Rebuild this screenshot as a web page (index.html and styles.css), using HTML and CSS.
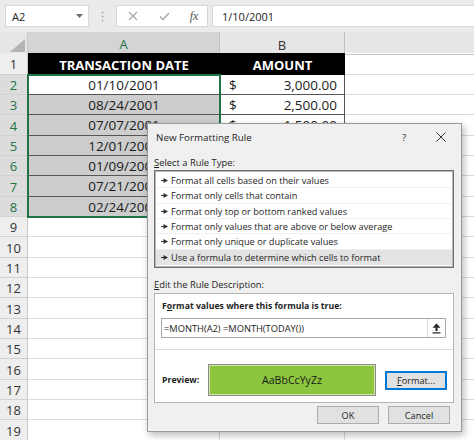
FILE: index.html
```html
<!DOCTYPE html>
<html>
<head>
<meta charset="utf-8">
<link rel="stylesheet" href="styles.css">
</head>
<body>
<div class="fbar">
  <div class="namebox"><span>A2</span><svg class="caret" width="7" height="4" viewBox="0 0 7 4"><polygon points="0,0 7,0 3.5,4" fill="#6a6a6a"/></svg></div>
  <div class="grip"><svg width="3" height="11" viewBox="0 0 3 11"><circle cx="1.5" cy="1.5" r="1" fill="#b0b0b0"/><circle cx="1.5" cy="5.5" r="1" fill="#b0b0b0"/><circle cx="1.5" cy="9.5" r="1" fill="#b0b0b0"/></svg></div>
  <div class="fbtns">
    <span class="fi"><svg width="10" height="10" viewBox="0 0 10 10"><path d="M1 1 L9 9 M9 1 L1 9" stroke="#a8a8a8" stroke-width="1.2"/></svg></span>
    <span class="fi"><svg width="11" height="9" viewBox="0 0 11 9"><path d="M1 4.5 L4 7.5 L10 1" stroke="#a8a8a8" stroke-width="1.3" fill="none"/></svg></span>
    <span class="fi fx">fx</span>
  </div>
  <div class="finput">1/10/2001</div>
</div>

<div class="sheet">
  <div class="row hrow">
    <div class="corner"><svg width="15" height="13" viewBox="0 0 15 13"><polygon points="0,13 15,13 15,0" fill="#b4b4b4"/></svg></div>
    <div class="ch sel">A</div>
    <div class="ch">B</div>
    <div class="ch rest"></div>
  </div>
  <div class="row h22">
    <div class="rh">1</div>
    <div class="c hd">TRANSACTION DATE</div>
    <div class="c hd">AMOUNT</div>
    <div class="c g"></div>
  </div>
  <div class="row h20">
    <div class="rh on">2</div>
    <div class="c da act">01/10/2001</div>
    <div class="c mo"><span>$</span><span>3,000.00</span></div>
    <div class="c g"></div>
  </div>
  <div class="row h20">
    <div class="rh on">3</div>
    <div class="c da">08/24/2001</div>
    <div class="c mo"><span>$</span><span>2,500.00</span></div>
    <div class="c g"></div>
  </div>
  <div class="row h21">
    <div class="rh on">4</div>
    <div class="c da">07/07/2001</div>
    <div class="c mo"><span>$</span><span>1,500.00</span></div>
    <div class="c g"></div>
  </div>
  <div class="row h20">
    <div class="rh on">5</div>
    <div class="c da">12/01/2001</div>
    <div class="c mo"></div>
    <div class="c g"></div>
  </div>
  <div class="row h20">
    <div class="rh on">6</div>
    <div class="c da">01/09/2001</div>
    <div class="c mo"></div>
    <div class="c g"></div>
  </div>
  <div class="row h21">
    <div class="rh on">7</div>
    <div class="c da">07/21/2001</div>
    <div class="c mo"></div>
    <div class="c g"></div>
  </div>
  <div class="row h20">
    <div class="rh on">8</div>
    <div class="c da">02/24/2001</div>
    <div class="c mo"></div>
    <div class="c g"></div>
  </div>
  <div class="row h20"><div class="rh">9</div><div class="c g"></div><div class="c g"></div><div class="c g"></div></div>
  <div class="row h21"><div class="rh">10</div><div class="c g"></div><div class="c g"></div><div class="c g"></div></div>
  <div class="row h20"><div class="rh">11</div><div class="c g"></div><div class="c g"></div><div class="c g"></div></div>
  <div class="row h20"><div class="rh">12</div><div class="c g"></div><div class="c g"></div><div class="c g"></div></div>
  <div class="row h21"><div class="rh">13</div><div class="c g"></div><div class="c g"></div><div class="c g"></div></div>
  <div class="row h20"><div class="rh">14</div><div class="c g"></div><div class="c g"></div><div class="c g"></div></div>
  <div class="row h20"><div class="rh">15</div><div class="c g"></div><div class="c g"></div><div class="c g"></div></div>
  <div class="row h21"><div class="rh">16</div><div class="c g"></div><div class="c g"></div><div class="c g"></div></div>
  <div class="row h20"><div class="rh">17</div><div class="c g"></div><div class="c g"></div><div class="c g"></div></div>
  <div class="row h20"><div class="rh">18</div><div class="c g"></div><div class="c g"></div><div class="c g"></div></div>
  <div class="row h21"><div class="rh">19</div><div class="c g"></div><div class="c g"></div><div class="c g"></div></div>
</div>

<div class="selbox"></div>

<div class="dlg">
  <div class="dtitle">
    <span class="dt">New Formatting Rule</span>
    <span class="dq">?</span>
    <svg class="dx" width="10" height="10" viewBox="0 0 10 10"><path d="M0.5 0.5 L9.5 9.5 M9.5 0.5 L0.5 9.5" stroke="#333" stroke-width="1"/></svg>
  </div>
  <div class="lbl l1"><u>S</u>elect a Rule Type:</div>
  <div class="list">
    <div class="item i15"><svg class="arr" width="7" height="5" viewBox="0 0 7 5"><path d="M0 2.5 H3" stroke="#333" stroke-width="1"/><polygon points="2.5,0 7,2.5 2.5,5" fill="#333"/></svg>Format all cells based on their values</div>
    <div class="item i16"><svg class="arr" width="7" height="5" viewBox="0 0 7 5"><path d="M0 2.5 H3" stroke="#333" stroke-width="1"/><polygon points="2.5,0 7,2.5 2.5,5" fill="#333"/></svg>Format only cells that contain</div>
    <div class="item i15"><svg class="arr" width="7" height="5" viewBox="0 0 7 5"><path d="M0 2.5 H3" stroke="#333" stroke-width="1"/><polygon points="2.5,0 7,2.5 2.5,5" fill="#333"/></svg>Format only top or bottom ranked values</div>
    <div class="item i15"><svg class="arr" width="7" height="5" viewBox="0 0 7 5"><path d="M0 2.5 H3" stroke="#333" stroke-width="1"/><polygon points="2.5,0 7,2.5 2.5,5" fill="#333"/></svg>Format only values that are above or below average</div>
    <div class="item i16"><svg class="arr" width="7" height="5" viewBox="0 0 7 5"><path d="M0 2.5 H3" stroke="#333" stroke-width="1"/><polygon points="2.5,0 7,2.5 2.5,5" fill="#333"/></svg>Format only unique or duplicate values</div>
    <div class="item i15 isel"><svg class="arr" width="7" height="5" viewBox="0 0 7 5"><path d="M0 2.5 H3" stroke="#333" stroke-width="1"/><polygon points="2.5,0 7,2.5 2.5,5" fill="#333"/></svg>Use a formula to determine which cells to format</div>
  </div>
  <div class="lbl l2"><u>E</u>dit the Rule Description:</div>
  <div class="group">
    <div class="gtop">
      <div class="blbl">F<u>o</u>rmat values where this formula is true:</div>
      <div class="finp">
        <span class="ftxt">=MONTH(A2) =MONTH(TODAY())</span>
        <span class="cbtn"><svg width="9" height="11" viewBox="0 0 9 11"><polygon points="4.5,0.5 8.5,4.8 0.5,4.8" fill="#222"/><rect x="3.5" y="4.5" width="2" height="3.5" fill="#222"/><rect x="0.5" y="9.3" width="8" height="1.2" fill="#222"/></svg></span>
      </div>
    </div>
    <div class="gbot">
      <div class="blbl plbl">Preview:</div>
      <div class="prev">AaBbCcYyZz</div>
      <div class="btn fmt"><u>F</u>ormat...</div>
    </div>
  </div>
  <div class="actions">
    <div class="btn">OK</div>
    <div class="btn">Cancel</div>
  </div>
</div>
</body>
</html>
```

FILE: styles.css
```css
* { box-sizing: border-box; }
html, body { margin: 0; padding: 0; }
body {
  width: 474px;
  height: 440px;
  overflow: hidden;
  position: relative;
  background: #fff;
  font-family: "Open Sans", "Noto Sans", sans-serif;
  color: #1e1e1e;
}

/* formula bar */
.fbar {
  height: 32px;
  background: #ebebeb;
  display: flex;
  align-items: center;
  padding-left: 5px;
}
.namebox {
  width: 84px;
  height: 22px;
  background: #fff;
  border: 1px solid #d8d8d8;
  display: flex;
  align-items: center;
  justify-content: space-between;
  padding: 0 5px 0 6px;
  font-size: 11px;
}
.grip {
  width: 27px;
  display: flex;
  justify-content: center;
}
.fbtns {
  width: 92px;
  height: 22px;
  background: #fff;
  border: 1px solid #d8d8d8;
  display: grid;
  grid-template-columns: 32px 30px 30px;
  align-items: center;
}
.fi { display: flex; justify-content: center; align-items: center; }
.fx {
  font-family: "Liberation Serif", "DejaVu Serif", serif;
  font-style: italic;
  font-size: 12px;
  color: #555;
}
.finput {
  flex: 1;
  height: 22px;
  margin-left: 4px;
  background: #fff;
  border: 1px solid #d8d8d8;
  border-right: none;
  padding-left: 9px;
  display: flex;
  align-items: center;
  font-size: 11px;
}

/* sheet */
.sheet { display: flex; flex-direction: column; }
.row {
  display: grid;
  grid-template-columns: 28px 192px 125px 1fr;
}
.hrow { height: 21px; background: #e6e6e6; }
.h22 { height: 22px; }
.h20 { height: 20px; }
.h21 { height: 21px; }
.corner {
  display: flex;
  align-items: flex-end;
  justify-content: flex-end;
  padding: 0 2px 2px 0;
  border-right: 1px solid #c8c8c8;
  border-bottom: 1px solid #c8c8c8;
}
.ch {
  display: flex;
  align-items: center;
  justify-content: center;
  font-size: 13px;
  color: #333;
  padding-top: 3px;
  border-right: 1px solid #c0c0c0;
  border-bottom: 1px solid #c8c8c8;
}
.ch.sel {
  background: #d4d4d4;
  color: #217346;
  border-bottom: 2px solid #217346;
}
.ch.rest { border-right: none; }
.rh {
  background: #eeeeee;
  border-right: 1px solid #c8c8c8;
  border-bottom: 1px solid #d2d2d2;
  display: flex;
  align-items: center;
  justify-content: center;
  font-size: 13px;
  color: #333;
  padding-top: 1px;
}
.rh.on { background: #dcdcdc; color: #217346; }
.c {
  display: flex;
  align-items: center;
  font-size: 13.5px;
  color: #1a1a1a;
  overflow: hidden;
  white-space: nowrap;
}
.c.g {
  border-right: 1px solid #dadada;
  border-bottom: 1px solid #dadada;
}
.row .c.g:last-child { border-right: none; }
.c.hd {
  background: #000;
  color: #fff;
  font-weight: 700;
  font-size: 13px;
  justify-content: center;
  padding-top: 1px;
}
.c.da {
  background: #cdcdcd;
  justify-content: center;
  border-bottom: 1px solid #555;
}
.c.da.act { background: #fff; }
.c.mo {
  justify-content: space-between;
  padding: 0 7px 0 9px;
  border-bottom: 1px solid #555;
  border-right: 1px solid #555;
}

.selbox {
  position: absolute;
  left: 27px;
  top: 74px;
  width: 194px;
  height: 144px;
  border: 2px solid #217346;
  pointer-events: none;
}

/* dialog */
.dlg {
  position: absolute;
  left: 147px;
  top: 123px;
  width: 315px;
  height: 309px;
  background: #f0f0f0;
  border: 1px solid #9a9a9a;
  box-shadow: 2px 3px 7px rgba(0, 0, 0, 0.28);
  display: flex;
  flex-direction: column;
  padding: 0 7px 0 6px;
  font-size: 9.2px;
  color: #1e1e1e;
}
.dtitle {
  height: 26px;
  display: flex;
  align-items: center;
}
.dt { flex: 1; padding-left: 2px; font-size: 9.8px; }
.dq { width: 20px; text-align: center; font-size: 9.8px; margin-right: 22px; }
.dx { margin-right: 8px; }
.lbl { height: 13px; line-height: 13px; font-size: 9.4px; }
.l1 { margin-top: 6px; margin-bottom: 1px; }
.l2 { margin-top: 10px; margin-bottom: 2px; }
.list {
  height: 98px;
  background: #fff;
  border: 1px solid #6f6f6f;
  box-shadow: inset 0 0 0 1px #b8b8b8;
  padding: 2px 1px;
  display: flex;
  flex-direction: column;
}
.item {
  display: flex;
  align-items: center;
  padding-left: 5px;
  border-bottom: 1px solid #efefef;
  white-space: nowrap;
}
.item:last-child { border-bottom: none; }
.i15 { height: 15px; }
.i16 { height: 16px; }
.isel { background: #e3e3e3; }
.arr { margin-right: 3px; flex: none; }

.group {
  height: 110px;
  background: #fff;
  border: 1px solid #b4b4b4;
  display: flex;
  flex-direction: column;
}
.gtop {
  padding: 6px 7px 11px 6px;
  border-bottom: 1px solid #dcdcdc;
}
.blbl { font-weight: 700; height: 13px; line-height: 13px; padding-left: 1px; font-size: 8.7px; }
.finp {
  margin-top: 5px;
  height: 20px;
  border: 1px solid #a8a8a8;
  display: flex;
  align-items: center;
  padding-left: 2px;
  background: #fff;
}
.ftxt { flex: 1; font-size: 9.3px; }
.cbtn {
  width: 18px;
  height: 18px;
  border-left: 1px solid #dcdcdc;
  display: flex;
  align-items: center;
  justify-content: center;
}
.gbot {
  flex: 1;
  display: flex;
  align-items: center;
  padding: 8px 0 0 6px;
}
.plbl { width: 47px; }
.prev {
  width: 168px;
  height: 32px;
  background: #8cc63f;
  border: 1px solid #8a8a8a;
  box-shadow: inset 0 0 0 1px #cfe8a8;
  display: flex;
  align-items: center;
  justify-content: center;
  font-size: 10.6px;
  color: #1a1a1a;
}
.btn {
  width: 62px;
  height: 18px;
  background: #e1e1e1;
  border: 1px solid #adadad;
  display: flex;
  align-items: center;
  justify-content: center;
  font-size: 9.2px;
}
.fmt {
  margin-left: 9px;
  height: 19px;
  border: 2px solid #0078d7;
}
.actions {
  display: flex;
  justify-content: flex-end;
  gap: 9px;
  margin-top: 3px;
  padding-right: 4px;
}
```
